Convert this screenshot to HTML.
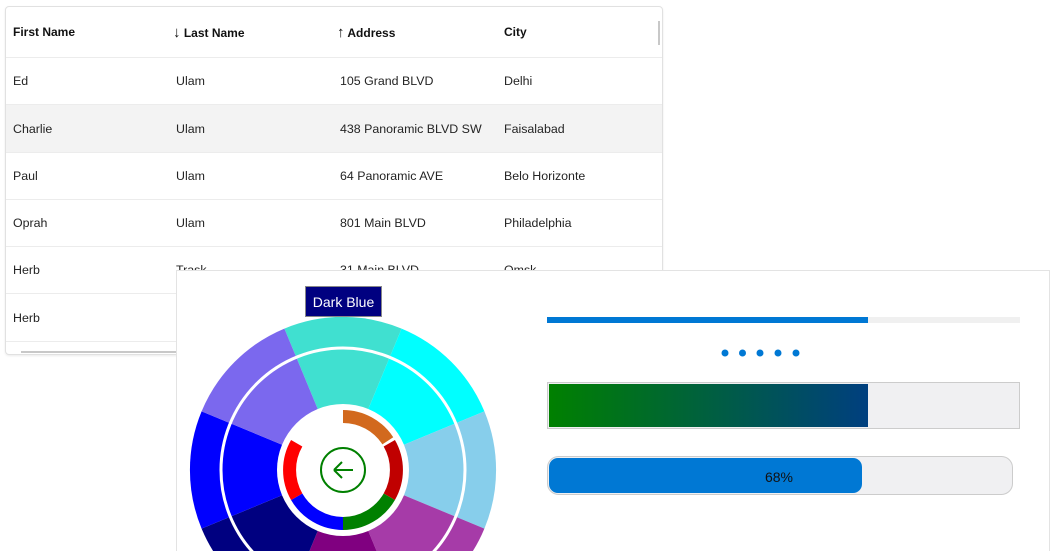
<!DOCTYPE html>
<html style="overflow:hidden"><head><style>
html,body{margin:0;width:1050px;height:551px;overflow:hidden}
body{background:#fff;font-family:"Liberation Sans",sans-serif;position:relative}
.card{position:absolute;left:5px;top:6px;width:656px;height:347px;border:1px solid #e1e1e1;border-radius:4px;background:#fff;box-shadow:0 1px 2px rgba(0,0,0,.08);overflow:hidden}
.row{position:absolute;left:0;width:656px;height:47px;border-bottom:1px solid #ececec;font-size:12.4px;color:#242424}
.row span{position:absolute;top:17px}
.hd{font-weight:bold;font-size:12px;color:#111}
.c1{left:7px}.c2{left:170px}.c3{left:334px}.c4{left:498px}
.panel{position:absolute;left:176px;top:270px;width:872px;height:290px;background:#fff;border:1px solid #e3e3e3;border-bottom:none}
</style></head><body>
<div class="card">
 <div class="row hd" style="top:0;height:50px"><span class="c1" style="top:18px">First Name</span><span class="c2" style="left:167px;top:17px"><span style="position:static;font-weight:normal;font-size:15px">↓</span> Last Name</span><span class="c3" style="left:331px;top:17px"><span style="position:static;font-weight:normal;font-size:15px">↑</span> Address</span><span class="c4" style="top:18px">City</span></div>
 <div style="position:absolute;left:652px;top:14px;width:2px;height:24px;background:#c8c8c8"></div>
 <div class="row" style="top:50px"><span class="c1">Ed</span><span class="c2">Ulam</span><span class="c3">105 Grand BLVD</span><span class="c4">Delhi</span></div>
 <div class="row" style="top:98px;background:#f3f3f3"><span class="c1">Charlie</span><span class="c2">Ulam</span><span class="c3">438 Panoramic BLVD SW</span><span class="c4">Faisalabad</span></div>
 <div class="row" style="top:145px"><span class="c1">Paul</span><span class="c2">Ulam</span><span class="c3">64 Panoramic AVE</span><span class="c4">Belo Horizonte</span></div>
 <div class="row" style="top:192px"><span class="c1">Oprah</span><span class="c2">Ulam</span><span class="c3">801 Main BLVD</span><span class="c4">Philadelphia</span></div>
 <div class="row" style="top:239px"><span class="c1">Herb</span><span class="c2">Trask</span><span class="c3">31 Main BLVD</span><span class="c4">Omsk</span></div>
 <div class="row" style="top:287px"><span class="c1">Herb</span></div>
 <div style="position:absolute;left:15px;top:344px;width:170px;height:2px;background:#c8c8c8"></div>
</div>
<div class="panel"></div>
<svg width="1050" height="551" style="position:absolute;left:0;top:0">
 <g transform="translate(343,470)">
  <path d="M-58.6,-141.4 A153,153 0 0 1 58.6,-141.4 L0,0Z" fill="#40E0D0"/>
  <path d="M58.6,-141.4 A153,153 0 0 1 141.4,-58.6 L0,0Z" fill="#00FFFF"/>
  <path d="M141.4,-58.6 A153,153 0 0 1 141.4,58.6 L0,0Z" fill="#87CEEB"/>
  <path d="M141.4,58.6 A153,153 0 0 1 58.6,141.4 L0,0Z" fill="#A63BA8"/>
  <path d="M58.6,141.4 A153,153 0 0 1 -58.6,141.4 L0,0Z" fill="#800080"/>
  <path d="M-58.6,141.4 A153,153 0 0 1 -141.4,58.6 L0,0Z" fill="#000080"/>
  <path d="M-141.4,58.6 A153,153 0 0 1 -141.4,-58.6 L0,0Z" fill="#0000FF"/>
  <path d="M-141.4,-58.6 A153,153 0 0 1 -58.6,-141.4 L0,0Z" fill="#7B68EE"/>
  <circle r="122" fill="none" stroke="#fff" stroke-width="3"/>
  <circle r="66" fill="#fff"/>
  <g fill="none" stroke-width="13">
   <path d="M0,-53.5 A53.5,53.5 0 0 1 44.8,-29.2" stroke="#D2691E"/>
   <path d="M46.3,-26.7 A53.5,53.5 0 0 1 46.3,26.7" stroke="#C00000"/>
   <path d="M46.3,26.7 A53.5,53.5 0 0 1 0,53.5" stroke="#008000"/>
   <path d="M0,53.5 A53.5,53.5 0 0 1 -46.3,26.7" stroke="#0000FF"/>
   <path d="M-46.3,26.7 A53.5,53.5 0 0 1 -46.3,-26.7" stroke="#FF0000"/>
  </g>
  <circle r="22" fill="none" stroke="#008000" stroke-width="2"/>
  <path d="M-9,0 H10 M-9,0 L-1,-8 M-9,0 L-1,8" stroke="#008000" stroke-width="2" fill="none"/>
 </g>
 <rect x="305.5" y="286.5" width="76" height="30" fill="#000080" stroke="#888"/>
 <text x="343.5" y="307" fill="#fff" font-size="14" text-anchor="middle" font-family="Liberation Sans, sans-serif">Dark Blue</text>
 <rect x="547" y="317" width="473" height="6" fill="#f0f0f0"/>
 <rect x="547" y="317" width="321" height="6" fill="#0078D4"/>
 <g fill="#0078D4"><circle cx="725" cy="353" r="3.5"/><circle cx="742.5" cy="353" r="3.5"/><circle cx="760" cy="353" r="3.5"/><circle cx="778" cy="353" r="3.5"/><circle cx="796" cy="353" r="3.5"/></g>
 <defs><linearGradient id="g"><stop offset="0" stop-color="#008000"/><stop offset="1" stop-color="#003F7F"/></linearGradient></defs>
 <rect x="547.5" y="382.5" width="472" height="46" fill="#f0f0f2" stroke="#ccc"/>
 <rect x="549" y="384" width="319" height="43" fill="url(#g)"/>
 <rect x="547.5" y="456.5" width="465" height="38" rx="11" fill="#f0f0f2" stroke="#ccc"/>
 <rect x="549" y="458" width="313" height="35" rx="9" fill="#0078D4"/>
 <text x="779" y="482" font-size="14" text-anchor="middle" fill="#111" font-family="Liberation Sans, sans-serif">68%</text>
</svg>
</body></html>
